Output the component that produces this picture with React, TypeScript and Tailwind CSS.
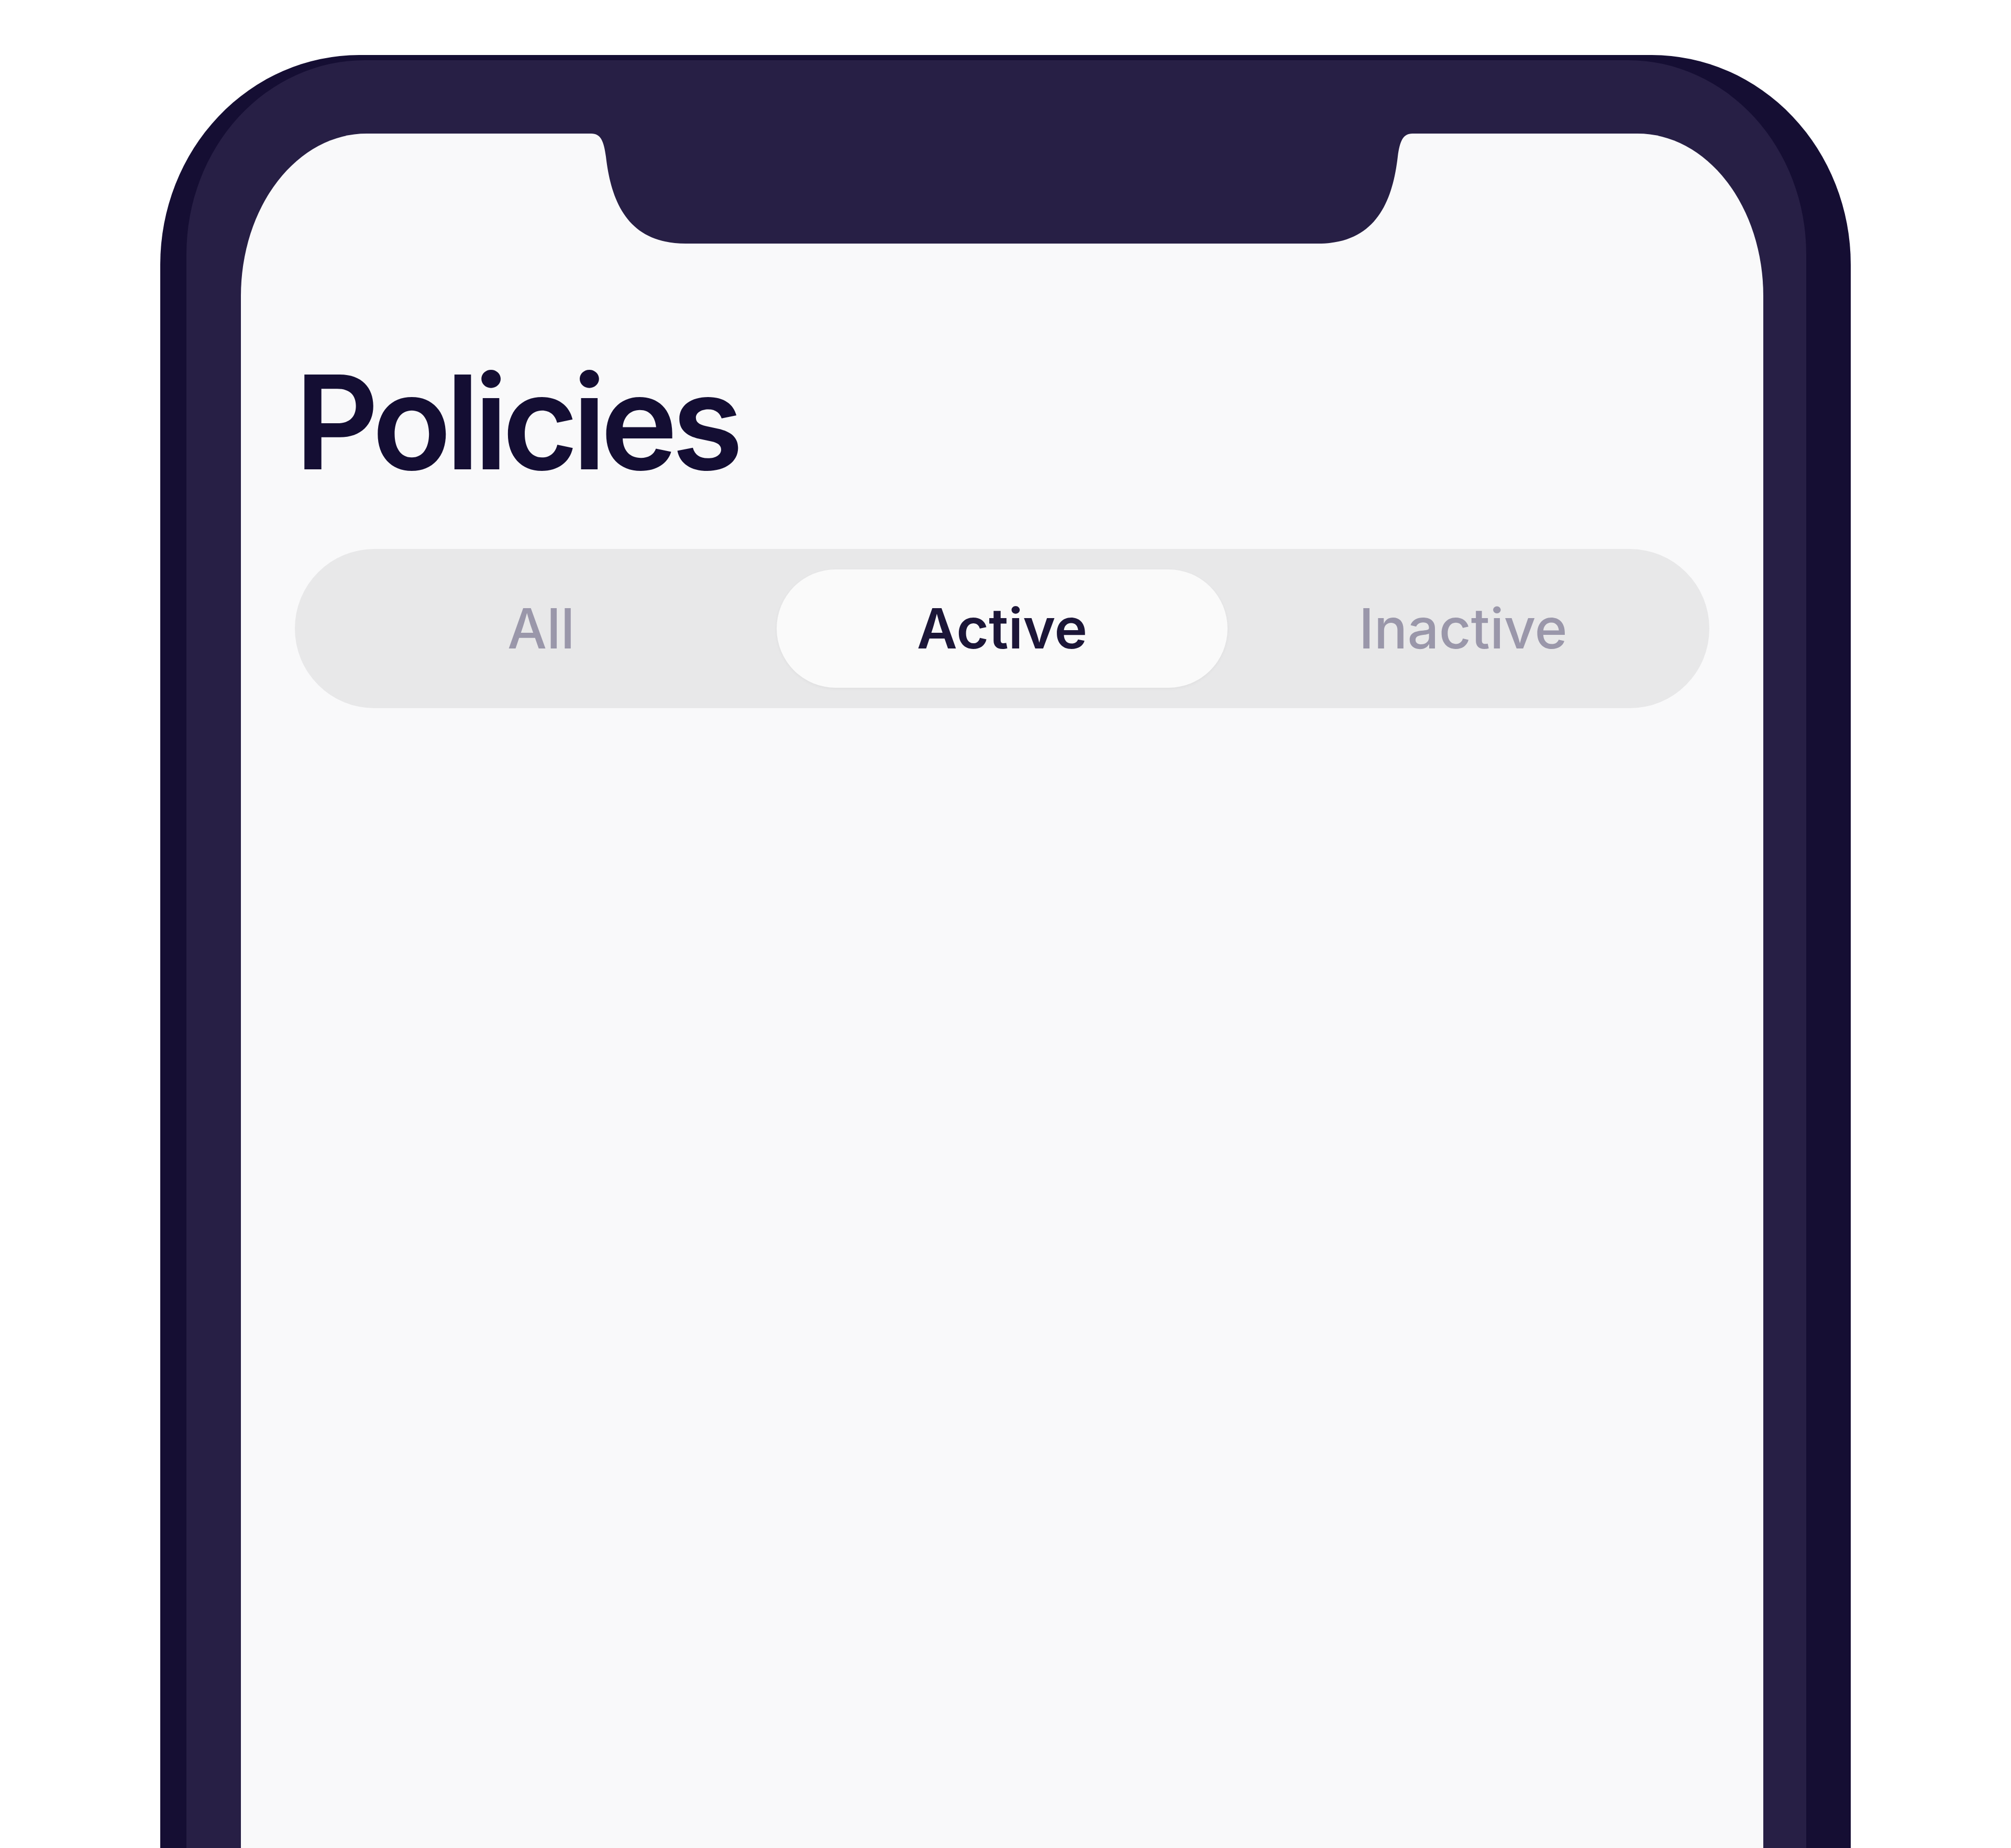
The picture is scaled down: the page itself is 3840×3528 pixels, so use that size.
const font = { fontFamily: 'Inter, "Noto Sans", sans-serif' };

function Notch() {
  return (
    <svg
      className="absolute left-[669px] top-0"
      width="1568"
      height="212"
      viewBox="0 0 1568 212"
    >
      <path
        d="M0 0 C18 0 24 14 28 44 C38 130 70 210 180 210 L1388 210 C1498 210 1530 130 1540 44 C1544 14 1550 0 1568 0 Z"
        fill="#271f45"
      />
    </svg>
  );
}

const tabs = ["All", "Active", "Inactive"];

export default function App() {
  return (
    <div className="h-[3528px] overflow-hidden bg-white" style={font}>
      {/* Phone frame */}
      <div className="mx-auto mt-[105px] h-[4400px] w-[3228px] rounded-[380px/400px] bg-[#150e33] pl-[50px] pr-[85px] pt-[10px]">
        <div className="h-full rounded-[340px/370px] bg-[#271f45] pl-[104px] pr-[82px] pt-[140px]">
          {/* Screen */}
          <div className="relative h-full rounded-[240px/310px] bg-[#f9f9fa] px-[103px] pt-[426px]">
            <Notch />
            <h1 className="text-[249px] font-semibold leading-none tracking-[-0.045em] text-[#140e33]">
              Policies
            </h1>

            <div className="mt-[118px] grid h-[304px] grid-cols-3 rounded-full bg-[#e8e8e9] px-[30px] py-[39px]">
              {tabs.map((t) => (
                <div key={t} className="px-[10px]">
                  <div
                    className={
                      t === "Active"
                        ? "flex h-full items-center justify-center rounded-full bg-[#fafafa] text-[106px] font-semibold leading-none text-[#1c1638] shadow-[0_2px_6px_rgba(0,0,0,0.04)]"
                        : "flex h-full items-center justify-center text-[106px] font-medium leading-none text-[#9a97aa]"
                    }
                  >
                    {t}
                  </div>
                </div>
              ))}
            </div>
          </div>
        </div>
      </div>
    </div>
  );
}
